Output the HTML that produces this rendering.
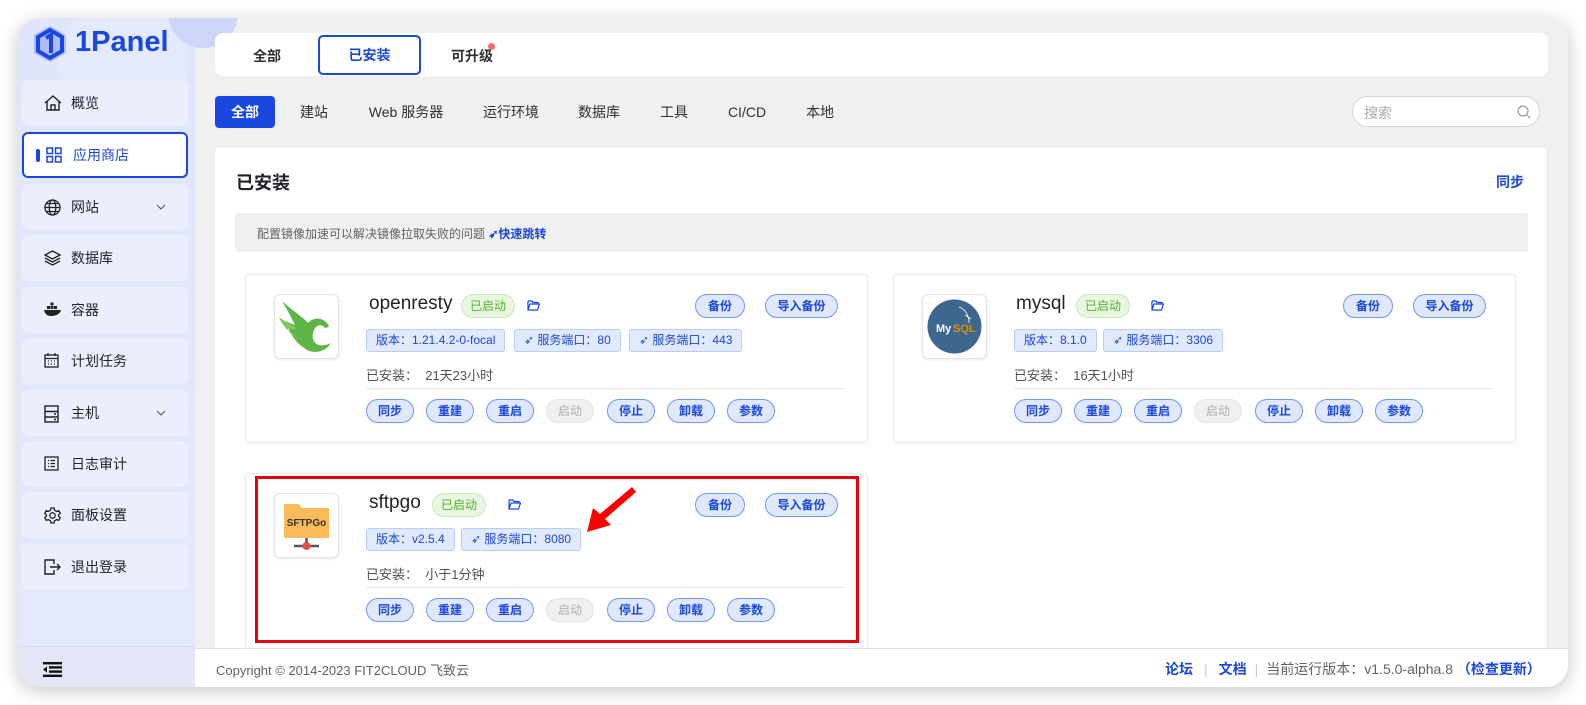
<!DOCTYPE html>
<html><head><meta charset="utf-8">
<style>
*{box-sizing:border-box;margin:0;padding:0}
body{width:1586px;height:705px;background:#fff;font-family:"Liberation Sans","Noto Sans CJK SC",sans-serif;position:relative;overflow:hidden;color:#303133}
.win{position:absolute;left:18px;top:18px;width:1550px;height:669px;border-radius:22px;background:#f0f0f1;overflow:hidden;box-shadow:0 4px 18px rgba(0,0,0,.22)}
.a{position:absolute}
.side{position:absolute;left:0;top:0;width:177px;height:669px;background:linear-gradient(180deg,#dfe5fb 0%,#e4e8fb 100%)}
.mi{position:absolute;left:4px;width:166px;height:46px;border-radius:6px;background:#ebeefd;font-size:14px;color:#1f2329;display:flex;align-items:center;padding-left:49px}
.mi svg{position:absolute;left:22px;top:15px}
.mi .chev{position:absolute;left:134px;top:20px}
.act{background:#fff;border:2px solid #1a47e0;color:#1a47e0}
.blue{color:#1a47e0}
.tag{position:absolute;height:23px;border-radius:3px;background:#e1eafd;border:1px solid #b7cdfa;color:#1a47e0;font-size:12px;line-height:21px;padding:0 9px;white-space:nowrap}
.btn{position:absolute;height:24px;width:48px;border-radius:12px;background:#dfe8fd;border:1px solid #6e97f0;color:#1a47e0;font-size:12px;font-weight:bold;line-height:22px;text-align:center}
.dis{background:#f0f0f0;border-color:#e4e4e4;color:#b0b0b0;font-weight:normal}
.badge{position:absolute;height:24px;border-radius:12px;background:#e8f6e2;border:1px solid #cbeab9;color:#52b32b;font-size:12px;line-height:22px;padding:0 8px}
.card{position:absolute;background:#fff;border:1px solid #e6e9ef;border-radius:4px;box-shadow:0 1px 4px rgba(0,0,0,.05)}
.ico{position:absolute;width:65px;height:65px;border:1px solid #e4e4e4;border-radius:6px;background:#fff;box-shadow:0 1px 3px rgba(0,0,0,.08)}
.name{position:absolute;font-size:19px;color:#1f2329}
.inst{position:absolute;font-size:13px;color:#505255}
.div{position:absolute;height:1px;background:#e4e7ed}
.cat{position:absolute;top:96px;height:32px;line-height:32px;font-size:14px;color:#303133;transform:translateX(-50%)}
</style></head><body>
<div class="win">
 <div class="side">
  <div class="a" style="left:40px;top:-20px;width:130px;height:130px;border-radius:50%;background:rgba(255,255,255,.18)"></div>
  <div class="a" style="left:150px;top:-40px;width:70px;height:70px;border-radius:50%;background:#cdd5fa"></div>
  <svg class="a" style="left:13px;top:6px" width="38" height="40" viewBox="0 0 38 40"><polygon points="19,2 35,11 35,29 19,38 3,29 3,11" fill="#4f6ef0" opacity=".35"/><polygon points="19,6 31,13 31,27 19,34 7,27 7,13" fill="none" stroke="#1a47e0" stroke-width="4"/><path d="M15 14 L20 11 L20 29" stroke="#1a47e0" stroke-width="4" fill="none"/></svg>
  <div class="a" style="left:57px;top:8px;font-size:29px;font-weight:bold;color:#1a47e0">1Panel</div>
  <div class="mi" style="top:62px"><svg width="18" height="16" viewBox="0 0 18 16"><path d="M1 8 L9 1 L17 8 M3 6 V15 H15 V6 M7 15 V10 H11 V15" stroke="#222" stroke-width="1.4" fill="none"/></svg>概览</div>
  <div class="mi act" style="top:114px"><div class="a" style="left:12px;top:15px;width:4px;height:13px;border-radius:2px;background:#1a47e0"></div><svg width="16" height="16" viewBox="0 0 16 16" style="left:22px;top:13px"><g fill="none" stroke="#1a47e0" stroke-width="1.5"><rect x="1" y="1" width="5.5" height="5.5"/><rect x="9.5" y="1" width="5.5" height="5.5"/><rect x="1" y="9.5" width="5.5" height="5.5"/><rect x="9.5" y="9.5" width="5.5" height="5.5"/></g></svg><span>应用商店</span></div>
  <div class="mi" style="top:166px"><svg width="17" height="17" viewBox="0 0 17 17"><g fill="none" stroke="#222" stroke-width="1.3"><circle cx="8.5" cy="8.5" r="7.5"/><ellipse cx="8.5" cy="8.5" rx="3.3" ry="7.5"/><path d="M1 8.5 H16 M2 4.5 H15 M2 12.5 H15"/></g></svg>网站<svg class="chev" width="10" height="6" viewBox="0 0 10 6"><path d="M1 1 L5 5 L9 1" stroke="#555" fill="none"/></svg></div>
  <div class="mi" style="top:217px"><svg width="17" height="16" viewBox="0 0 17 16"><g fill="none" stroke="#222" stroke-width="1.3"><path d="M8.5 1 L16 5 L8.5 9 L1 5 Z"/><path d="M1 8 L8.5 12 L16 8"/><path d="M1 11 L8.5 15 L16 11"/></g></svg>数据库</div>
  <div class="mi" style="top:269px"><svg width="18" height="14" viewBox="0 0 18 14"><g fill="#222"><rect x="3" y="4" width="3" height="3"/><rect x="6.5" y="4" width="3" height="3"/><rect x="10" y="4" width="3" height="3"/><rect x="6.5" y="0.5" width="3" height="3"/><path d="M0 8 H17 C16 12 12 14 7 14 C3 14 1 12 0 8Z"/></g></svg>容器</div>
  <div class="mi" style="top:320px"><svg width="15" height="15" viewBox="0 0 15 15"><g fill="none" stroke="#222" stroke-width="1.3"><rect x="1" y="2" width="13" height="12"/><path d="M1 5.5 H14 M4 0 V3 M11 0 V3"/><path d="M4 8 H5 M7 8 H8 M10 8 H11 M4 11 H5 M7 11 H8 M10 11 H11"/></g></svg>计划任务</div>
  <div class="mi" style="top:372px"><svg width="15" height="18" viewBox="0 0 15 18"><g fill="none" stroke="#222" stroke-width="1.4"><rect x="1" y="1" width="13" height="16"/><path d="M1 6.5 H14 M1 12 H14"/><path d="M10 9 H12 M10 14.5 H12"/></g></svg>主机<svg class="chev" width="10" height="6" viewBox="0 0 10 6"><path d="M1 1 L5 5 L9 1" stroke="#555" fill="none"/></svg></div>
  <div class="mi" style="top:423px"><svg width="15" height="15" viewBox="0 0 15 15"><g fill="none" stroke="#222" stroke-width="1.3"><rect x="1" y="1" width="13" height="13"/><path d="M4 4.5 H5 M6.5 4.5 H11 M4 7.5 H5 M6.5 7.5 H11 M4 10.5 H5 M6.5 10.5 H11"/></g></svg>日志审计</div>
  <div class="mi" style="top:474px"><svg width="17" height="17" viewBox="0 0 17 17"><g fill="none" stroke="#222" stroke-width="1.3"><path d="M7 1 H10 L10.5 3.2 L12.6 4.4 L14.8 3.7 L16.3 6.3 L14.6 7.8 V9.2 L16.3 10.7 L14.8 13.3 L12.6 12.6 L10.5 13.8 L10 16 H7 L6.5 13.8 L4.4 12.6 L2.2 13.3 L0.7 10.7 L2.4 9.2 V7.8 L0.7 6.3 L2.2 3.7 L4.4 4.4 L6.5 3.2 Z"/><circle cx="8.5" cy="8.5" r="2.7"/></g></svg>面板设置</div>
  <div class="mi" style="top:526px"><svg width="17" height="16" viewBox="0 0 17 16"><g fill="none" stroke="#222" stroke-width="1.4"><path d="M10 5 V1 H1 V15 H10 V11"/><path d="M6 8 H16 M13 5 L16 8 L13 11"/></g></svg>退出登录</div>
  <div class="a" style="left:0;top:628px;width:177px;height:1px;background:#d8dcea"></div>
  <div class="a" style="left:0;top:629px;width:177px;height:40px;background:#e3e6f6"></div>
  <svg class="a" style="left:25px;top:644px" width="19" height="15" viewBox="0 0 19 15"><g fill="#111"><rect x="0" y="0" width="19" height="2.4"/><rect x="6" y="4.2" width="13" height="2.4"/><rect x="6" y="8.4" width="13" height="2.4"/><rect x="0" y="12.6" width="19" height="2.4"/><polygon points="0,7.5 4,4.5 4,10.5"/></g></svg>
 </div>

 <!-- top tabs -->
 <div class="a" style="left:197px;top:15px;width:1333px;height:43px;background:#fff;border-radius:8px"></div>
 <div class="a" style="left:249px;top:28px;transform:translateX(-50%);font-size:14px;font-weight:bold;color:#303133">全部</div>
 <div class="a" style="left:300px;top:17px;width:103px;height:40px;border:2px solid #1a47e0;border-radius:5px;text-align:center;line-height:36px;font-size:14px;font-weight:bold;color:#1a47e0">已安装</div>
 <div class="a" style="left:454px;top:28px;transform:translateX(-50%);font-size:14px;font-weight:bold;color:#303133">可升级</div>
 <div class="a" style="left:470px;top:25px;width:7px;height:7px;border-radius:50%;background:#f56c6c"></div>

 <!-- categories -->
 <div class="a" style="left:197px;top:78px;width:60px;height:32px;background:#1a47e0;border-radius:4px;color:#fff;font-size:14px;font-weight:bold;text-align:center;line-height:32px">全部</div>
 <div class="cat" style="left:296px;top:78px">建站</div>
 <div class="cat" style="left:388px;top:78px">Web 服务器</div>
 <div class="cat" style="left:493px;top:78px">运行环境</div>
 <div class="cat" style="left:581px;top:78px">数据库</div>
 <div class="cat" style="left:656px;top:78px">工具</div>
 <div class="cat" style="left:729px;top:78px">CI/CD</div>
 <div class="cat" style="left:802px;top:78px">本地</div>
 <div class="a" style="left:1334px;top:78px;width:188px;height:31px;border:1px solid #d4d7de;border-radius:16px;background:#fff"><span class="a" style="left:11px;top:6px;font-size:14px;color:#a8abb2">搜索</span><svg class="a" style="left:164px;top:8px" width="14" height="14" viewBox="0 0 14 14"><circle cx="6" cy="6" r="5" fill="none" stroke="#999" stroke-width="1.2"/><path d="M10 10 L13 13" stroke="#999" stroke-width="1.2"/></svg></div>

 <!-- main panel -->
 <div class="a" style="left:197px;top:130px;width:1331px;height:510px;background:#fff;border-radius:4px"></div>
 <div class="a" style="left:218px;top:151px;font-size:18px;font-weight:bold;color:#1f2329">已安装</div>
 <div class="a" style="left:1478px;top:154px;font-size:14px;font-weight:bold;color:#1a47e0">同步</div>
 <div class="a" style="left:217px;top:195px;width:1293px;height:39px;background:#f0f0f0;border-radius:3px"><span class="a" style="left:22px;top:12px;font-size:12px;color:#606266">配置镜像加速可以解决镜像拉取失败的问题 <span style="color:#1a47e0;font-weight:bold">➶快速跳转</span></span></div>

 <!-- card 1 -->
 <div class="card" style="left:227px;top:256px;width:623px;height:169px"></div>
 <div class="ico" style="left:256px;top:276px"><svg width="63" height="63" viewBox="0 0 63 63"><path d="M7 6 C20 18 28 22 33 28 C40 20 52 24 54 32 L50 33 C46 28 40 30 38 38 C36 48 44 54 56 48 C50 58 36 60 28 52 C18 46 14 34 10 26 L20 30 C16 22 12 14 7 6Z" fill="#5cb544"/><path d="M4 22 C12 28 18 30 22 34 L12 34 C16 38 20 40 24 44 C16 40 8 32 4 22Z" fill="#7dc95e"/></svg></div>
 <div class="name" style="left:351px;top:275px">openresty</div>
 <div class="badge" style="left:443px;top:276px">已启动</div>
 <svg class="a" style="left:509px;top:282px" width="13" height="11" viewBox="0 0 13 11"><path d="M1 1 H5 L6 2.5 H11 V4 M1 1 V10 H10.5 L12.5 4 H3 L1 10" fill="none" stroke="#1a47e0" stroke-width="1.2"/></svg>
 <div class="btn" style="left:677px;top:276px;width:50px">备份</div>
 <div class="btn" style="left:747px;top:276px;width:73px">导入备份</div>
 <div class="tag" style="left:348px;top:311px">版本：1.21.4.2-0-focal</div>
 <div class="tag" style="left:496px;top:311px">➶ 服务端口：80</div>
 <div class="tag" style="left:611px;top:311px">➶ 服务端口：443</div>
 <div class="inst" style="left:348px;top:347px">已安装：&nbsp; 21天23小时</div>
 <div class="div" style="left:348px;top:370px;width:480px"></div>
 <div class="btn" style="left:348px;top:381px">同步</div>
 <div class="btn" style="left:408px;top:381px">重建</div>
 <div class="btn" style="left:468px;top:381px">重启</div>
 <div class="btn dis" style="left:528px;top:381px">启动</div>
 <div class="btn" style="left:589px;top:381px">停止</div>
 <div class="btn" style="left:649px;top:381px">卸载</div>
 <div class="btn" style="left:709px;top:381px">参数</div>

 <!-- card 2 -->
 <div class="card" style="left:875px;top:256px;width:623px;height:169px"></div>
 <div class="ico" style="left:904px;top:276px"><svg width="63" height="63" viewBox="0 0 63 63"><circle cx="31.5" cy="31.5" r="27" fill="#3e6790"/><text x="13" y="37" font-family="Liberation Sans" font-size="11" font-weight="bold" fill="#fff">My</text><text x="30" y="37" font-family="Liberation Sans" font-size="11" font-weight="bold" fill="#e48e00">SQL</text><path d="M36 12 C42 14 46 20 46 28 M42 20 L48 24" stroke="#fff" stroke-width=".8" fill="none"/></svg></div>
 <div class="name" style="left:998px;top:275px">mysql</div>
 <div class="badge" style="left:1058px;top:276px">已启动</div>
 <svg class="a" style="left:1133px;top:282px" width="13" height="11" viewBox="0 0 13 11"><path d="M1 1 H5 L6 2.5 H11 V4 M1 1 V10 H10.5 L12.5 4 H3 L1 10" fill="none" stroke="#1a47e0" stroke-width="1.2"/></svg>
 <div class="btn" style="left:1325px;top:276px;width:50px">备份</div>
 <div class="btn" style="left:1395px;top:276px;width:73px">导入备份</div>
 <div class="tag" style="left:996px;top:311px">版本：8.1.0</div>
 <div class="tag" style="left:1085px;top:311px">➶ 服务端口：3306</div>
 <div class="inst" style="left:996px;top:347px">已安装：&nbsp; 16天1小时</div>
 <div class="div" style="left:996px;top:370px;width:480px"></div>
 <div class="btn" style="left:996px;top:381px">同步</div>
 <div class="btn" style="left:1056px;top:381px">重建</div>
 <div class="btn" style="left:1116px;top:381px">重启</div>
 <div class="btn dis" style="left:1176px;top:381px">启动</div>
 <div class="btn" style="left:1237px;top:381px">停止</div>
 <div class="btn" style="left:1297px;top:381px">卸载</div>
 <div class="btn" style="left:1357px;top:381px">参数</div>

 <!-- card 3 -->
 <div class="card" style="left:227px;top:455px;width:623px;height:180px"></div>
 <div class="a" style="left:237px;top:458px;width:604px;height:167px;border:3px solid #e8000b"></div>
 <div class="ico" style="left:256px;top:475px"><svg width="63" height="63" viewBox="0 0 63 63"><path d="M9 10 H24 L27 14 H54 V44 H9Z" fill="#fbbb5a"/><text x="31.5" y="32" text-anchor="middle" font-family="Liberation Sans" font-size="10" font-weight="bold" fill="#333">SFTPGo</text><path d="M31.5 44 V52 M19 52 H44" stroke="#555" stroke-width="2.5"/><circle cx="31.5" cy="52" r="4" fill="#e74c3c"/></svg></div>
 <div class="name" style="left:351px;top:474px">sftpgo</div>
 <div class="badge" style="left:414px;top:475px">已启动</div>
 <svg class="a" style="left:490px;top:481px" width="13" height="11" viewBox="0 0 13 11"><path d="M1 1 H5 L6 2.5 H11 V4 M1 1 V10 H10.5 L12.5 4 H3 L1 10" fill="none" stroke="#1a47e0" stroke-width="1.2"/></svg>
 <div class="btn" style="left:677px;top:475px;width:50px">备份</div>
 <div class="btn" style="left:747px;top:475px;width:73px">导入备份</div>
 <div class="tag" style="left:348px;top:510px">版本：v2.5.4</div>
 <div class="tag" style="left:443px;top:510px">➶ 服务端口：8080</div>
 <div class="inst" style="left:348px;top:546px">已安装：&nbsp; 小于1分钟</div>
 <div class="div" style="left:348px;top:569px;width:480px"></div>
 <div class="btn" style="left:348px;top:580px">同步</div>
 <div class="btn" style="left:408px;top:580px">重建</div>
 <div class="btn" style="left:468px;top:580px">重启</div>
 <div class="btn dis" style="left:528px;top:580px">启动</div>
 <div class="btn" style="left:589px;top:580px">停止</div>
 <div class="btn" style="left:649px;top:580px">卸载</div>
 <div class="btn" style="left:709px;top:580px">参数</div>
 <svg class="a" style="left:560px;top:465px" width="60" height="50" viewBox="0 0 60 50"><path d="M54 4 L58 9 L27 36 L33 42 L9 49 L15 25 L22 31 Z" fill="#f00"/></svg>

 <!-- footer -->
 <div class="a" style="left:177px;top:630px;width:1373px;height:1px;background:#dcdfe6"></div>
 <div class="a" style="left:177px;top:631px;width:1373px;height:38px;background:#fff"></div>
 <div class="a" style="left:198px;top:642px;font-size:13px;color:#606266">Copyright © 2014-2023 FIT2CLOUD 飞致云</div>
 <div class="a" style="left:1147px;top:641px;font-size:14px;color:#606266;white-space:nowrap"><b class="blue">论坛</b><span style="color:#ccc;margin:0 11px">|</span><b class="blue">文档</b><span style="color:#ccc;margin:0 8px">|</span>当前运行版本：v1.5.0-alpha.8 <b class="blue">（检查更新）</b></div>
</div>
</body></html>
